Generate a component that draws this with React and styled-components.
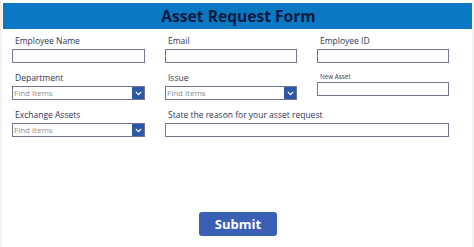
import React from "react";
import styled, { createGlobalStyle } from "styled-components";

const Global = createGlobalStyle`
  html, body { margin: 0; padding: 0; }
  body {
    width: 474px; height: 247px; overflow: hidden;
    background: #f2f2f2;
    font-family: "Open Sans", "Noto Sans", sans-serif;
  }
  * { box-sizing: border-box; }
`;

const Panel = styled.div`
  margin: 0 2px 0 2px;
  height: 247px;
  background: #ffffff;
  padding-top: 3px;
  display: flex;
  flex-direction: column;
`;

const Header = styled.div`
  height: 26px;
  margin: 0 0 0 1px;
  background: #0a78c3;
  display: flex;
  align-items: center;
  justify-content: center;
`;

const Title = styled.h1`
  margin: 0 0 0 2px;
  font-size: 15.6px;
  font-weight: 700;
  color: #0c1a3d;
`;

const Grid = styled.div`
  display: grid;
  grid-template-columns: 133px 132px 132px;
  column-gap: 20px;
  row-gap: 7px;
  padding: 4px 0 0 10px;
  align-items: start;
`;

const Field = styled.div`
  display: flex;
  flex-direction: column;
  grid-column: ${(p) => p.$span || "auto"};
`;

const Label = styled.label`
  font-size: ${(p) => (p.$small ? "6.3px" : "8.5px")};
  line-height: ${(p) => (p.$small ? "10px" : "16px")};
  color: #2f3656;
  padding-left: 3px;
  margin-top: ${(p) => (p.$small ? "2px" : "0")};
`;

const Input = styled.div`
  height: 14px;
  border: 1px solid #70748f;
  background: #fff;
`;

const Dropdown = styled.div`
  height: 14px;
  border: 1px solid #70748f;
  display: flex;
  align-items: stretch;
  background: #fff;
`;

const Placeholder = styled.span`
  flex: 1;
  font-size: 8px;
  line-height: 12px;
  color: #8d8d8d;
  padding-left: 1px;
`;

const Chevron = styled.span`
  width: 12px;
  background: #2b57a8;
  display: flex;
  align-items: center;
  justify-content: center;
`;

const Footer = styled.div`
  display: flex;
  justify-content: center;
  padding: 75px 0 0 0;
`;

const SubmitButton = styled.button`
  width: 78px;
  height: 24px;
  border: none;
  border-radius: 3px;
  background: #3a60b6;
  color: #ffffff;
  font-family: "Open Sans", "Noto Sans", sans-serif;
  font-weight: 700;
  font-size: 13px;
  padding: 0;
  margin-left: 2px;
`;

const Select = () => (
  <Dropdown>
    <Placeholder>Find items</Placeholder>
    <Chevron>
      <svg width="7" height="5" viewBox="0 0 7 5">
        <path d="M0.8 0.8 L3.5 3.6 L6.2 0.8" fill="none" stroke="#fff" strokeWidth="1.2" />
      </svg>
    </Chevron>
  </Dropdown>
);

export default function App() {
  return (
    <>
      <Global />
      <Panel>
        <Header>
          <Title>Asset Request Form</Title>
        </Header>
        <Grid>
          <Field>
            <Label>Employee Name</Label>
            <Input />
          </Field>
          <Field>
            <Label>Email</Label>
            <Input />
          </Field>
          <Field>
            <Label>Employee ID</Label>
            <Input />
          </Field>
          <Field>
            <Label>Department</Label>
            <Select />
          </Field>
          <Field>
            <Label>Issue</Label>
            <Select />
          </Field>
          <Field>
            <Label $small>New Asset</Label>
            <Input />
          </Field>
          <Field>
            <Label>Exchange Assets</Label>
            <Select />
          </Field>
          <Field $span="2 / 4">
            <Label>State the reason for your asset request</Label>
            <Input />
          </Field>
        </Grid>
        <Footer>
          <SubmitButton>Submit</SubmitButton>
        </Footer>
      </Panel>
    </>
  );
}
